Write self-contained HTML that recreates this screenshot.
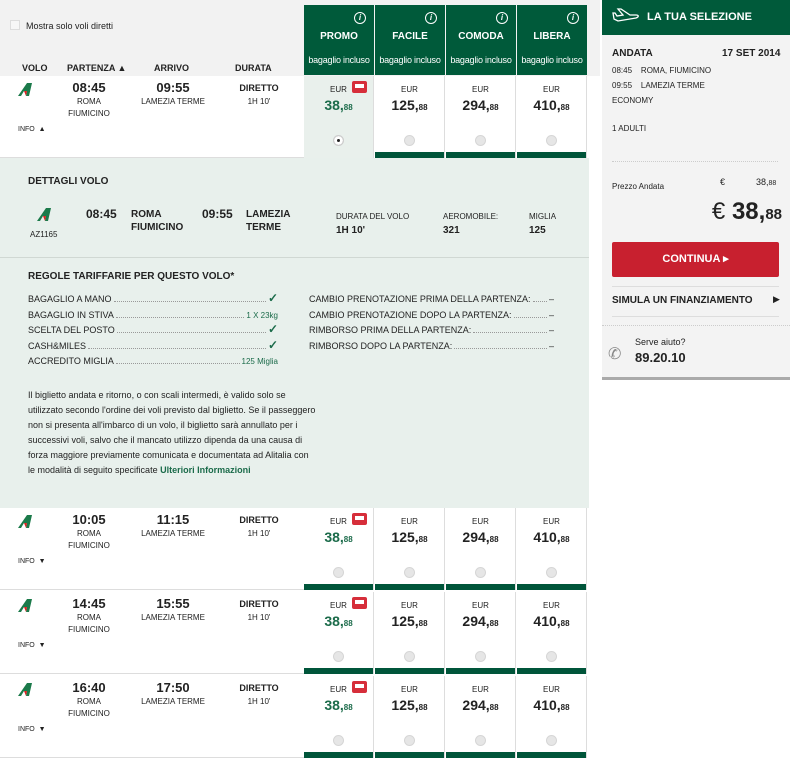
<!DOCTYPE html>
<html><head><meta charset="utf-8"><style>
*{margin:0;padding:0;box-sizing:border-box}
body{width:791px;height:758px;background:#fff;font-family:"Liberation Sans",sans-serif;color:#222;position:relative;overflow:hidden}
.a{position:absolute}
.c{text-align:center}
.b{font-weight:bold}
.tm{font-size:13px;font-weight:bold;width:80px;text-align:center}
.sm{font-size:8px;width:90px;text-align:center;line-height:12px}
.cell{position:absolute;width:70px;height:82px;background:#fff;border-right:1px solid #ddd}
.cell .eur{position:absolute;top:9px;left:0;width:100%;text-align:center;font-size:8px}
.cell .pr{position:absolute;top:21px;left:0;width:100%;text-align:center;font-size:14px;font-weight:bold}
.cell .pr small{font-size:8px}
.cell .rd{position:absolute;top:59px;left:29px;width:11px;height:11px;border-radius:50%;background:#e6e6e6;border:1px solid #d6d6d6}
.cell .bar{position:absolute;bottom:0;left:0;width:100%;height:6px;background:#00553a}
.gift{position:absolute;top:5px;left:48px;width:15px;height:12px;background:#d62e3a;border-radius:2px}
.gift:after{content:"";position:absolute;left:3px;top:3px;width:9px;height:4px;background:#fff}
.g{color:#1b6b4a}
.hd{position:absolute;top:5px;height:70px;width:70px;background:#005a3a;color:#fff;text-align:center}
.hd .i{position:absolute;top:7px;right:8px;width:12px;height:12px;border:1px solid #fff;border-radius:50%;font-size:8px;line-height:10px;font-style:italic;font-weight:bold}
.hd .n{position:absolute;top:26px;width:100%;font-size:10px;font-weight:bold}
.hd .s{position:absolute;top:50px;width:100%;font-size:9px;white-space:nowrap;letter-spacing:-0.2px}
.rule{font-size:9px;line-height:15.5px}
.rule div{display:flex;align-items:baseline}
.rule span.d{flex:1;border-bottom:1px dotted #999;margin:0 2px}
.ck{color:#1b6b4a;font-size:12px;font-weight:bold;line-height:10px}
</style></head><body>
<div class="a" style="left:0;top:0;width:600px;height:76px;background:#f2f2f2"></div>
<div class="a" style="left:10px;top:20px;width:10px;height:10px;border:1px solid #ddd;background:#f7f7f7"></div>
<div class="a" style="left:26px;top:21px;font-size:9px">Mostra solo voli diretti</div>
<div class="a b" style="left:22px;top:63px;font-size:9px">VOLO</div>
<div class="a b" style="left:67px;top:63px;font-size:9px">PARTENZA ▲</div>
<div class="a b" style="left:154px;top:63px;font-size:9px">ARRIVO</div>
<div class="a b" style="left:235px;top:63px;font-size:9px">DURATA</div>

<div class="hd" style="left:304px"><div class="i">i</div><div class="n">PROMO</div><div class="s">bagaglio incluso</div></div>
<div class="hd" style="left:375px"><div class="i">i</div><div class="n">FACILE</div><div class="s">bagaglio incluso</div></div>
<div class="hd" style="left:446px"><div class="i">i</div><div class="n">COMODA</div><div class="s">bagaglio incluso</div></div>
<div class="hd" style="left:517px"><div class="i">i</div><div class="n">LIBERA</div><div class="s">bagaglio incluso</div></div>

<div class="a" style="left:0;top:158px;width:589px;height:350px;background:#e8f0ec"></div>
<div class="a" style="left:0;top:257px;width:589px;height:1px;background:#d0d8d3"></div>
<div class="a b" style="left:28px;top:176px;font-size:10px">DETTAGLI VOLO</div>
<svg class="a" style="left:37px;top:208px" width="14" height="13" viewBox="0 0 14 13"><path d="M0 13L9 0h5L11 13h-3l1-5H6l-3 5z" fill="#1b7a4a"/><path d="M6 8h3l-1 5z" fill="#d22"/></svg>
<div class="a" style="left:30px;top:230px;font-size:8px">AZ1165</div>
<div class="a b" style="left:86px;top:207px;font-size:12px">08:45</div>
<div class="a b" style="left:131px;top:208px;font-size:10px;line-height:13px">ROMA<br>FIUMICINO</div>
<div class="a b" style="left:202px;top:207px;font-size:12px">09:55</div>
<div class="a b" style="left:246px;top:208px;font-size:10px;line-height:13px">LAMEZIA<br>TERME</div>
<div class="a" style="left:336px;top:212px;font-size:8px">DURATA DEL VOLO</div>
<div class="a b" style="left:336px;top:225px;font-size:10px">1H 10'</div>
<div class="a" style="left:443px;top:212px;font-size:8px">AEROMOBILE:</div>
<div class="a b" style="left:443px;top:225px;font-size:10px">321</div>
<div class="a" style="left:529px;top:212px;font-size:8px">MIGLIA</div>
<div class="a b" style="left:529px;top:225px;font-size:10px">125</div>
<div class="a b" style="left:28px;top:271px;font-size:10px">REGOLE TARIFFARIE PER QUESTO VOLO*</div>
<div class="a rule" style="left:28px;top:292px;width:250px">
<div>BAGAGLIO A MANO<span class="d"></span><span class="ck">✓</span></div>
<div>BAGAGLIO IN STIVA<span class="d"></span><span class="g" style="font-size:8px">1 X 23kg</span></div>
<div>SCELTA DEL POSTO<span class="d"></span><span class="ck">✓</span></div>
<div>CASH&amp;MILES<span class="d"></span><span class="ck">✓</span></div>
<div>ACCREDITO MIGLIA<span class="d"></span><span class="g" style="font-size:8px">125 Miglia</span></div>
</div>
<div class="a rule" style="left:309px;top:292px;width:245px">
<div>CAMBIO PRENOTAZIONE PRIMA DELLA PARTENZA:<span class="d"></span>–</div>
<div>CAMBIO PRENOTAZIONE DOPO LA PARTENZA:<span class="d"></span>–</div>
<div>RIMBORSO PRIMA DELLA PARTENZA:<span class="d"></span>–</div>
<div>RIMBORSO DOPO LA PARTENZA:<span class="d"></span>–</div>
</div>
<div class="a" style="left:28px;top:388px;width:290px;font-size:9px;line-height:15px">Il biglietto andata e ritorno, o con scali intermedi, è valido solo se utilizzato secondo l'ordine dei voli previsto dal biglietto. Se il passeggero non si presenta all'imbarco di un volo, il biglietto sarà annullato per i successivi voli, salvo che il mancato utilizzo dipenda da una causa di forza maggiore previamente comunicata e documentata ad Alitalia con le modalità di seguito specificate <span class="g b">Ulteriori Informazioni</span></div>

<div id="rows"></div>
<script>
var rows=[[76,"08:45","09:55",1],[508,"10:05","11:15",0],[592,"14:45","15:55",0],[676,"16:40","17:50",0]];
var h="";
rows.forEach(function(r){var T=r[0];
h+='<div class="a" style="left:0;top:'+T+'px;width:304px;height:82px;background:#fff;border-bottom:1px solid #ddd"></div>';
h+='<svg class="a" style="left:18px;top:'+(T+7)+'px" width="14" height="13" viewBox="0 0 14 13"><path d="M0 13L9 0h5L11 13h-3l1-5H6l-3 5z" fill="#1b7a4a"/><path d="M6 8h3l-1 5z" fill="#d22"/></svg>';
h+='<div class="a tm" style="left:49px;top:'+(T+4)+'px">'+r[1]+'</div>';
h+='<div class="a sm" style="left:44px;top:'+(T+20)+'px">ROMA<br>FIUMICINO</div>';
h+='<div class="a tm" style="left:133px;top:'+(T+4)+'px">'+r[2]+'</div>';
h+='<div class="a sm" style="left:128px;top:'+(T+20)+'px">LAMEZIA TERME</div>';
h+='<div class="a b c" style="left:219px;top:'+(T+7)+'px;width:80px;font-size:9px">DIRETTO</div>';
h+='<div class="a sm" style="left:214px;top:'+(T+20)+'px">1H 10\'</div>';
h+='<div class="a" style="left:18px;top:'+(T+50)+'px;font-size:7px">INFO &nbsp;'+(r[3]?'▲':'▼')+'</div>';
var p=[["38,","g"],["125,",""],["294,",""],["410,",""]];
[304,375,446,517].forEach(function(x,i){
h+='<div class="cell" style="left:'+x+'px;top:'+T+'px;'+(i==0&&r[3]?'background:#e9f0ec':'')+'"><div class="eur">EUR</div>'+(i==0?'<div class="gift"></div>':'')+'<div class="pr '+p[i][1]+'">'+p[i][0]+'<small>88</small></div><div class="rd" '+(i==0&&r[3]?'style="background:#fff;border-color:#ccc;box-shadow:inset 0 0 0 3px #fff,inset 0 0 0 6px #222"':'')+'></div>'+((i==0&&r[3])?'':'<div class="bar"></div>')+'</div>';});
});
document.getElementById("rows").innerHTML=h;
</script>

<div class="a" style="left:602px;top:0;width:188px;height:380px;background:#f3f3f3;border-bottom:3px solid #aaa"></div>
<div class="a" style="left:602px;top:0;width:188px;height:35px;background:#005a3a"></div>
<svg class="a" style="left:612px;top:8px" width="28" height="18" viewBox="0 0 28 18"><path d="M2 11l4 2 18-3c3-1 3-3 0-3l-6 0L9 1H6l5 6-6 1-2-3H1l1 6z" fill="none" stroke="#fff" stroke-width="1.3"/></svg>
<div class="a b" style="left:647px;top:11px;font-size:11px;color:#fff">LA TUA SELEZIONE</div>
<div class="a b" style="left:612px;top:48px;font-size:10px">ANDATA</div>
<div class="a b" style="left:722px;top:48px;font-size:10px">17 SET 2014</div>
<div class="a" style="left:612px;top:63px;font-size:8px;line-height:15px">08:45 &nbsp;&nbsp;&nbsp;ROMA, FIUMICINO<br>09:55 &nbsp;&nbsp;&nbsp;LAMEZIA TERME<br>ECONOMY</div>
<div class="a" style="left:612px;top:124px;font-size:8px">1 ADULTI</div>
<div class="a" style="left:612px;top:161px;width:166px;border-top:1px dotted #ccc"></div>
<div class="a" style="left:612px;top:182px;font-size:8px">Prezzo Andata</div>
<div class="a" style="left:720px;top:177px;font-size:9px">€</div>
<div class="a" style="left:756px;top:177px;font-size:9px">38,<small style="font-size:7px">88</small></div>
<div class="a" style="right:9px;top:198px;font-size:24px;white-space:nowrap"><span style="font-weight:normal">€</span> <b>38,</b><b style="font-size:15px">88</b></div>
<div class="a b" style="left:612px;top:242px;width:167px;height:35px;background:#c8202f;border-radius:2px;color:#fff;text-align:center;line-height:35px;font-size:11px">CONTINUA ▸</div>
<div class="a" style="left:612px;top:286px;width:167px;border-top:1px solid #ddd"></div>
<div class="a b" style="left:612px;top:295px;font-size:10px">SIMULA UN FINANZIAMENTO</div>
<div class="a" style="left:773px;top:294px;font-size:9px">▶</div>
<div class="a" style="left:612px;top:316px;width:167px;border-top:1px solid #ddd"></div>
<div class="a" style="left:602px;top:325px;width:188px;border-top:1px dotted #ccc"></div>
<div class="a" style="left:608px;top:344px;font-size:16px;color:#888">✆</div>
<div class="a" style="left:635px;top:337px;font-size:9px">Serve aiuto?</div>
<div class="a b" style="left:635px;top:350px;font-size:13px">89.20.10</div>
</body></html>
